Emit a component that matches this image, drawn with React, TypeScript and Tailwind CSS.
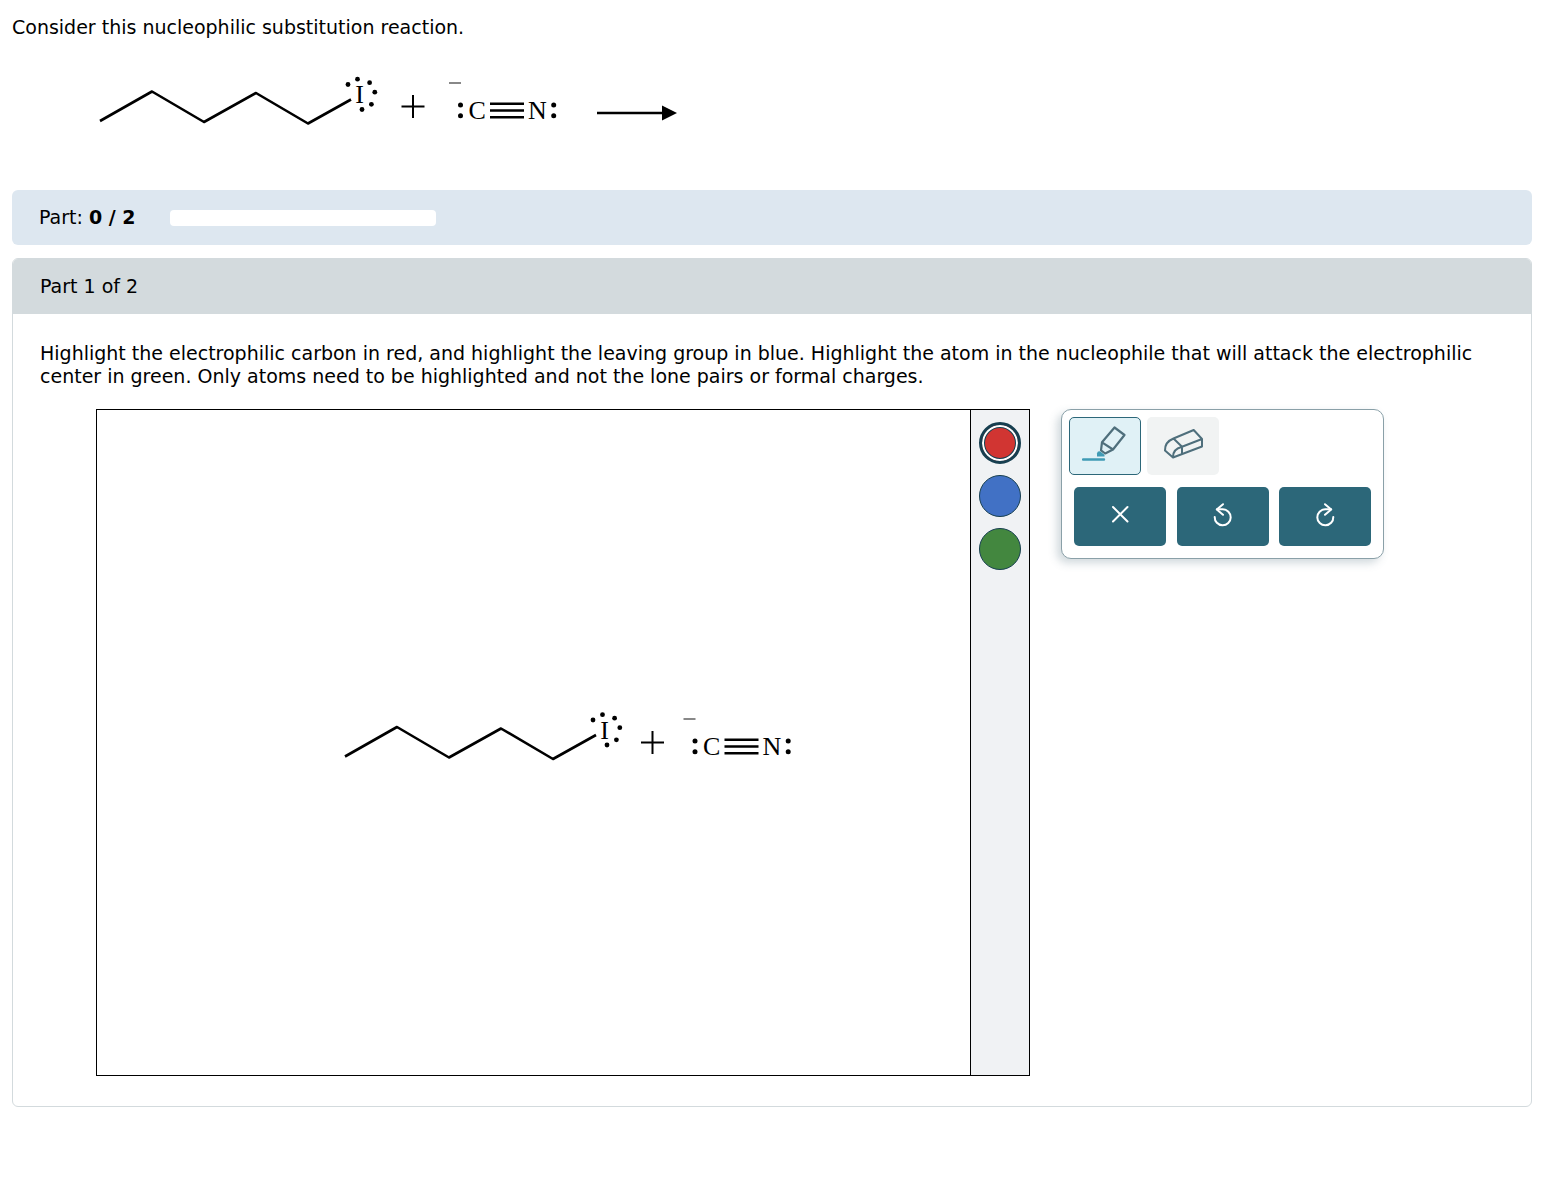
import { useState } from 'react';

type Tool = 'highlighter' | 'eraser';

const colors = [
  { name: 'red', className: 'bg-[#d13532]' },
  { name: 'blue', className: 'bg-[#4171c5]' },
  { name: 'green', className: 'bg-[#43873f]' },
];

const iodineDots = [
  [248, 24.5],
  [257.5, 19.2],
  [269.6, 22.7],
  [274.8, 32.2],
  [271.4, 44.3],
  [262, 49.5],
];

function AlkylIodide() {
  return (
    <g>
      <polyline
        points="0,61 52,31.5 104,62 156,33 208,63.5 251,39.5"
        fill="none"
        stroke="#000"
        strokeWidth="2.6"
        strokeLinejoin="round"
      />
      <text x="259.7" y="43" textAnchor="middle" fontSize="26">I</text>
      {iodineDots.map(([cx, cy]) => (
        <circle key={`${cx}-${cy}`} cx={cx} cy={cy} r="2.4" />
      ))}
    </g>
  );
}

function Plus() {
  return <path d="M-11.5 0H11.5M0-11.5V11.5" stroke="#000" strokeWidth="2" />;
}

// Origin is the left end of the formal charge
function Cyanide() {
  return (
    <g>
      <path d="M0 0H12" stroke="#555" strokeWidth="1.4" />
      <circle cx="11.5" cy="22" r="2.5" />
      <circle cx="11.5" cy="32.7" r="2.5" />
      <text x="19.5" y="36" fontSize="26">C</text>
      <path d="M41 20.8H75M41 27.5H75M41 34.2H75" stroke="#000" strokeWidth="2.6" />
      <text x="79" y="36" fontSize="26">N</text>
      <circle cx="104.7" cy="22" r="2.5" />
      <circle cx="104.7" cy="32.7" r="2.5" />
    </g>
  );
}

function HighlighterIcon() {
  return (
    <svg viewBox="0 0 46 38" className="h-[38px] w-[46px]" fill="none" strokeLinejoin="round" aria-hidden="true">
      <path
        d="M32.5 2.5 42.5 10 31 24.5 23.2 28.5 19 25.3 20 17.3ZM20 17.3 31 24.5"
        stroke="#4f6f7c"
        strokeWidth="2.2"
      />
      <path d="M15 31.5V28.5Q15.5 25.7 18.2 26.5L22.5 29.7V31.5Z" fill="#3f9bb5" />
      <path d="M1 34.5H22" stroke="#3f9bb5" strokeWidth="2.4" strokeLinecap="round" />
    </svg>
  );
}

function EraserIcon() {
  return (
    <svg
      viewBox="0 0 42 32"
      className="h-8 w-[42px]"
      fill="none"
      stroke="#4f6f7c"
      strokeWidth="2"
      strokeLinejoin="round"
      aria-hidden="true"
    >
      <path d="M31.7 2 11.5 10.5Q2.7 14 3 22.5L11 29.5 40 18.5V11ZM11 29.5Q10.5 21 20 18.7L40 11M11.5 10.5 20 18.7V26" />
    </svg>
  );
}

function RotateArrow() {
  return (
    <>
      <path d="M3.7 14A8 8 0 1 0 11.7 6.3H6" />
      <path d="M12 1.2 5.8 6.5 12 11.8" />
    </>
  );
}

const actions = [
  { label: 'Clear', icon: <path d="M5 4 19.5 18.5M19.5 4 5 18.5" /> },
  { label: 'Undo', icon: <RotateArrow /> },
  { label: 'Redo', icon: <g transform="matrix(-1 0 0 1 24 0)"><RotateArrow /></g> },
];

export default function App() {
  const [color, setColor] = useState('red');
  const [tool, setTool] = useState<Tool>('highlighter');

  const toolClass = (name: Tool) =>
    tool === name ? 'border-[#2c6779] bg-[#e0f1f6]' : 'border-transparent bg-[#f1f3f3]';

  return (
    <main className="min-h-screen bg-white pt-4 pr-5 pb-18 pl-3 font-['DejaVu_Sans',sans-serif] text-[19px] leading-[23px] text-black">
      <p>Consider this nucleophilic substitution reaction.</p>

      <svg
        viewBox="0 0 700 100"
        className="mt-5 h-[100px] w-[700px] max-w-full font-['Liberation_Serif',serif]"
        role="img"
        aria-label="1-iodohexane plus cyanide reaction"
      >
        <g transform="translate(88 1)"><AlkylIodide /></g>
        <g transform="translate(401 47.5)"><Plus /></g>
        <g transform="translate(437 24)"><Cyanide /></g>
        <path d="M585 54H651" stroke="#000" strokeWidth="2.4" />
        <path d="M650 46.5 665 54 650 61.5Z" />
      </svg>

      <div className="mt-[31px] flex h-[55px] items-center rounded-md bg-[#dde7f0] px-[27px]">
        <span className="min-w-[131px]">Part: <b>0 / 2</b></span>
        <div className="h-4 w-[266px] rounded bg-white" role="progressbar" aria-label="Parts completed" aria-valuenow={0} aria-valuemin={0} aria-valuemax={2} />
      </div>

      <section className="mt-[13px] overflow-hidden rounded-md border border-[#d3dadd]">
        <h2 className="bg-[#d3dadd] px-[27px] py-4">Part 1 of 2</h2>

        <div className="px-[27px] pt-7 pb-[30px]">
          <p>
            Highlight the electrophilic carbon in red, and highlight the leaving group in blue. Highlight the atom in the
            nucleophile that will attack the electrophilic center in green. Only atoms need to be highlighted and not the
            lone pairs or formal charges.
          </p>

          <div className="mt-[21px] flex items-start gap-[31px] pl-14">
            <div className="flex max-w-[934px] flex-1 border border-black">
              <svg
                viewBox="0 0 873 665"
                className="min-w-0 flex-1 font-['Liberation_Serif',serif]"
                role="img"
                aria-label="Highlightable reaction"
              >
                <g transform="translate(248 285.5)"><AlkylIodide /></g>
                <g transform="translate(555.5 332.5)"><Plus /></g>
                <g transform="translate(586.5 309)"><Cyanide /></g>
              </svg>
              <fieldset className="flex w-[59px] shrink-0 flex-col items-center gap-[11px] border-l border-black bg-[#f0f2f4] pt-3">
                {colors.map(({ name, className }) => (
                  <input
                    key={name}
                    type="radio"
                    name="color"
                    aria-label={name}
                    checked={color === name}
                    onChange={() => setColor(name)}
                    className={`size-[42px] cursor-pointer appearance-none rounded-full border border-[#173f50] checked:border-[3px] checked:shadow-[inset_0_0_0_2px_white,inset_0_0_0_3px_#173f50] ${className}`}
                  />
                ))}
              </fieldset>
            </div>

            <div className="flex w-[323px] shrink-0 flex-col gap-3 rounded-[10px] border border-[#8aa0a8] bg-white px-[7px] pt-[7px] pb-3 shadow-[-4px_4px_8px_rgba(70,105,120,0.25)]">
              <div className="flex gap-[6px]">
                <button
                  type="button"
                  aria-label="Highlighter"
                  aria-pressed={tool === 'highlighter'}
                  onClick={() => setTool('highlighter')}
                  className={`flex h-[58px] w-[72px] items-start justify-center rounded-[5px] border pt-[7px] ${toolClass('highlighter')}`}
                >
                  <HighlighterIcon />
                </button>
                <button
                  type="button"
                  aria-label="Eraser"
                  aria-pressed={tool === 'eraser'}
                  onClick={() => setTool('eraser')}
                  className={`flex h-[58px] w-[72px] items-start justify-center rounded-[5px] border pt-[10px] ${toolClass('eraser')}`}
                >
                  <EraserIcon />
                </button>
              </div>
              <div className="flex justify-between px-[5px]">
                {actions.map(({ label, icon }) => (
                  <button
                    key={label}
                    type="button"
                    aria-label={label}
                    className="flex h-[59px] w-[92px] items-start justify-center rounded-[5px] bg-[#2c6779] pt-4"
                  >
                    <svg
                      viewBox="0 0 24 24"
                      className="size-6"
                      fill="none"
                      stroke="white"
                      strokeWidth="2"
                      strokeLinecap="round"
                      strokeLinejoin="round"
                      aria-hidden="true"
                    >
                      {icon}
                    </svg>
                  </button>
                ))}
              </div>
            </div>
          </div>
        </div>
      </section>
    </main>
  );
}
